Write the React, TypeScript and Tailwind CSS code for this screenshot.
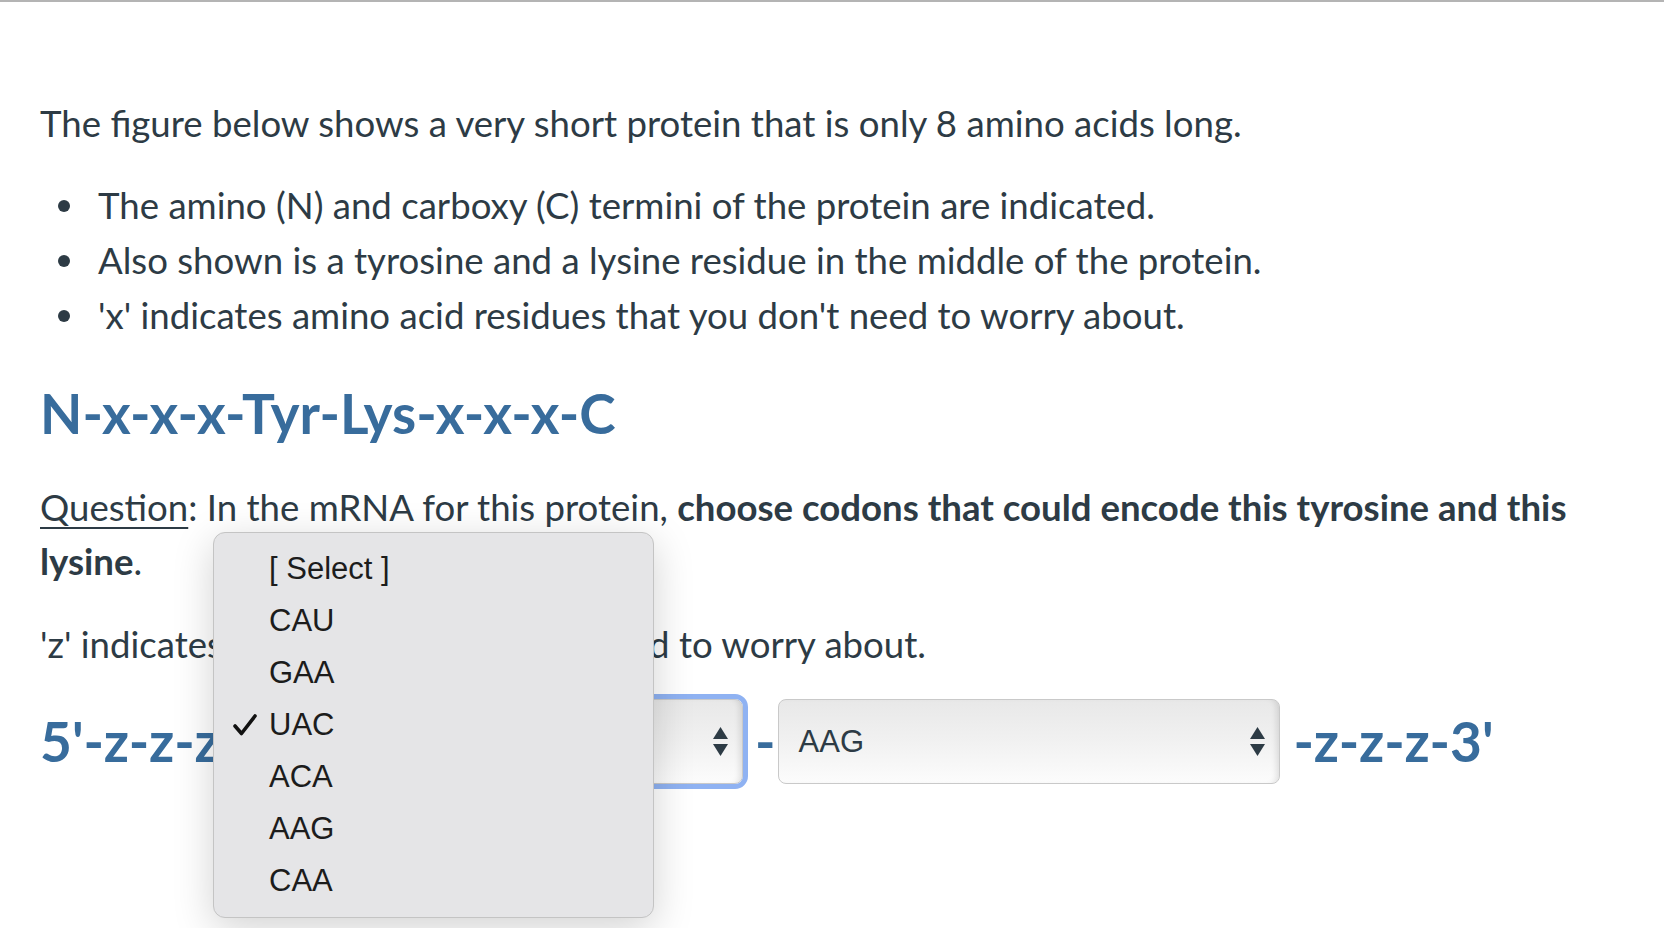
const codons = ["[ Select ]", "CAU", "GAA", "UAC", "ACA", "AAG", "CAA"];

function Arrows() {
  return (
    <svg width="15" height="29" viewBox="0 0 15 29" className="shrink-0">
      <path d="M7.5 0 L15 12 L0 12 Z" fill="#2d3b45" />
      <path d="M0 17 L15 17 L7.5 29 Z" fill="#2d3b45" />
    </svg>
  );
}

function FakeSelect({ value, focused }: { value: string; focused?: boolean }) {
  return (
    <div
      className={`relative flex h-[85px] w-[502px] shrink-0 items-center justify-between rounded-[8px] border border-[#c9c9c9] bg-gradient-to-b from-[#e8e8e8] via-[#f1f1f1] to-[#fcfcfc] pl-[20px] pr-[14px] shadow-[inset_-6px_0_6px_-4px_rgba(0,0,0,0.12)] ${
        focused ? "outline-[5px] outline-solid outline-[#8fb2f2]" : ""
      }`}
    >
      <span className="text-[31px] font-normal text-[#2d3b45] [font-family:'Liberation_Sans',Arial,sans-serif]">
        {value}
      </span>
      <Arrows />
    </div>
  );
}

function Check() {
  return (
    <svg width="24" height="22" viewBox="0 0 24 22" className="shrink-0">
      <path
        d="M2 12 L8.5 19.5 L22 2"
        fill="none"
        stroke="#111"
        strokeWidth="3.6"
        strokeLinecap="round"
        strokeLinejoin="round"
      />
    </svg>
  );
}

export default function App() {
  const bullets = [
    "The amino (N) and carboxy (C) termini of the protein are indicated.",
    "Also shown is a tyrosine and a lysine residue in the middle of the protein.",
    "'x' indicates amino acid residues that you don't need to worry about.",
  ];

  return (
    <div className="relative min-h-[928px] bg-white text-[#2d3b45] [font-family:Lato,'Open_Sans',sans-serif]">
      <div className="h-[2px] bg-[#b4b4b4]" />

      <div className="px-[40px] pt-[94px] text-[36.6px] leading-[55px]">
        <p>The figure below shows a very short protein that is only 8 amino acids long.</p>

        <ul className="mt-[27px] pl-[18px]">
          {bullets.map((b) => (
            <li key={b} className="flex items-center gap-[28px]">
              <span className="h-[12px] w-[12px] shrink-0 rounded-full bg-[#2d3b45]" />
              <span>{b}</span>
            </li>
          ))}
        </ul>

        <h2 className="mt-[37px] text-[55px] font-bold leading-[66px] text-[#386c9c]">
          N-x-x-x-Tyr-Lys-x-x-x-C
        </h2>

        <p className="mt-[34px] leading-[54px]">
          <span className="underline decoration-[2px] underline-offset-[6px]">Question</span>: In the mRNA
          for this protein, <strong className="font-bold">choose codons that could encode this tyrosine and this lysine</strong>.
        </p>

        <p className="mt-[29px] leading-[54px]">'z' indicates codons that you don't need to worry about.</p>

        <div className="mt-[28px] flex items-center text-[55px] font-bold text-[#386c9c]">
          <span className="mr-[1px]">5'-z-z-z-</span>
          <FakeSelect value="UAC" focused />
          <span className="ml-[12px] mr-[2px]">-</span>
          <FakeSelect value="AAG" />
          <span className="ml-[14px]">-z-z-z-3'</span>
        </div>
      </div>

      <div className="absolute left-[213px] top-[532px] w-[441px] rounded-[12px] border border-[#c4c4c4] bg-[#e5e5e7] py-[10px] shadow-[0_10px_40px_rgba(0,0,0,0.18)] [font-family:'Liberation_Sans',Arial,sans-serif]">
        {codons.map((c) => (
          <div key={c} className="flex h-[52px] items-center text-[31px] text-[#1c1c1c]">
            <span className="flex w-[55px] justify-end pr-[12px]">{c === "UAC" ? <Check /> : null}</span>
            <span>{c}</span>
          </div>
        ))}
      </div>
    </div>
  );
}
